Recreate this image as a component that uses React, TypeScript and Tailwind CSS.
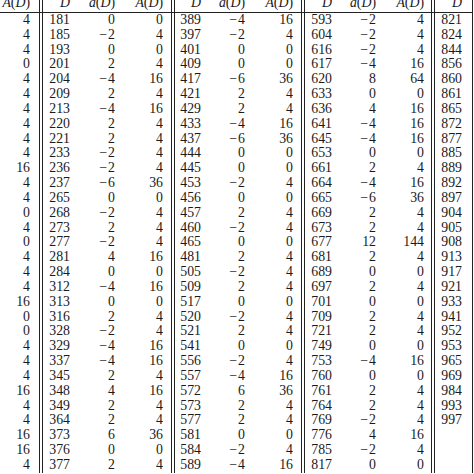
import type { ReactNode } from "react";

// first column continues A(D) from the previous block
const carriedA = [4, 4, 4, 0, 4, 4, 4, 4, 4, 4, 16, 4, 4, 0, 4, 0, 4, 4, 4, 16, 0, 0, 4, 4, 4, 16, 4, 4, 16, 16, 4];

// [D, a(D)], A(D) = a(D)^2
const groups: [number, number][][] = [
  [
    [181, 0], [185, -2], [193, 0], [201, 2], [204, -4], [209, 2], [213, -4], [220, 2], [221, 2], [233, -2],
    [236, -2], [237, -6], [265, 0], [268, -2], [273, 2], [277, -2], [281, 4], [284, 0], [312, -4], [313, 0],
    [316, 2], [328, -2], [329, -4], [337, -4], [345, 2], [348, 4], [349, 2], [364, 2], [373, 6], [376, 0], [377, 2],
  ],
  [
    [389, -4], [397, -2], [401, 0], [409, 0], [417, -6], [421, 2], [429, 2], [433, -4], [437, -6], [444, 0],
    [445, 0], [453, -2], [456, 0], [457, 2], [460, -2], [465, 0], [481, 2], [505, -2], [509, 2], [517, 0],
    [520, -2], [521, 2], [541, 0], [556, -2], [557, -4], [572, 6], [573, 2], [577, 2], [581, 0], [584, -2], [589, -4],
  ],
  [
    [593, -2], [604, -2], [616, -2], [617, -4], [620, 8], [633, 0], [636, 4], [641, -4], [645, -4], [653, 0],
    [661, 2], [664, -4], [665, -6], [669, 2], [673, 2], [677, 12], [681, 2], [689, 0], [697, 2], [701, 0],
    [709, 2], [721, 2], [749, 0], [753, -4], [760, 0], [761, 2], [764, 2], [769, -2], [776, 4], [785, -2], [817, 0],
  ],
];

const lastD = [821, 824, 844, 856, 860, 861, 865, 872, 877, 885, 889, 892, 897, 904, 905, 908, 913, 917, 921, 933, 941, 952, 953, 965, 969, 984, 993, 997];

function num(v: number): ReactNode {
  if (v < 0)
    return (
      <>
        <span className="mr-[1px]">−</span>
        {-v}
      </>
    );
  return v;
}

const headD = <i>D</i>;
const headSmallA = (
  <>
    <i>a</i>(<i>D</i>)
  </>
);
const headA = (
  <>
    <i>A</i>(<i>D</i>)
  </>
);

function NumCol({ w, head, values }: { w: string; head: ReactNode; values: ReactNode[] }) {
  return (
    <div className={`flex flex-col text-right ${w}`}>
      <div className="h-[17px] border-b border-[#222]">{head}</div>
      {values.map((v, i) => (
        <div key={i} className="h-[14.83px] whitespace-nowrap">
          {v}
        </div>
      ))}
    </div>
  );
}

function Gap({ w }: { w: string }) {
  return (
    <div className={`flex flex-col ${w}`}>
      <div className="h-[17px] border-b border-[#222]" />
    </div>
  );
}

function Double() {
  return (
    <div className="flex w-[4px] flex-col border-x border-[#222]">
      <div className="h-[17px] border-b border-[#222]" />
    </div>
  );
}

function Single() {
  return <div className="w-px bg-[#222]" />;
}

// widths per group: D, a(D), A(D), trailing gap
const groupWidths = [
  ["w-[27px]", "w-[45px]", "w-[48px]", "w-[8px]"],
  ["w-[26px]", "w-[44px]", "w-[48px]", "w-[8px]"],
  ["w-[27px]", "w-[44px]", "w-[48px]", "w-[7px]"],
];

export default function App() {
  return (
    <div className="h-[474px] w-[474px] overflow-hidden bg-white [font-family:'Liberation_Serif','Times_New_Roman',serif]">
      <div className="-mt-[4px] flex text-[13.8px] leading-[14.83px] text-[#1a1a1a]">
        <NumCol w="w-[30px]" head={headA} values={carriedA.map(num)} />
        <Gap w="w-[9px]" />
        <Double />
        {groups.map((g, gi) => {
          const [wd, wa, wA, wg] = groupWidths[gi];
          return (
            <div key={gi} className="flex">
              <NumCol w={wd} head={headD} values={g.map(([d]) => d)} />
              <NumCol w={wa} head={headSmallA} values={g.map(([, a]) => num(a))} />
              <NumCol w={wA} head={headA} values={g.map(([, a]) => a * a)} />
              <Gap w={wg} />
              <Double />
            </div>
          );
        })}
        <NumCol w="w-[27px]" head={headD} values={lastD} />
        <Gap w="w-[10px]" />
        <Single />
      </div>
    </div>
  );
}
